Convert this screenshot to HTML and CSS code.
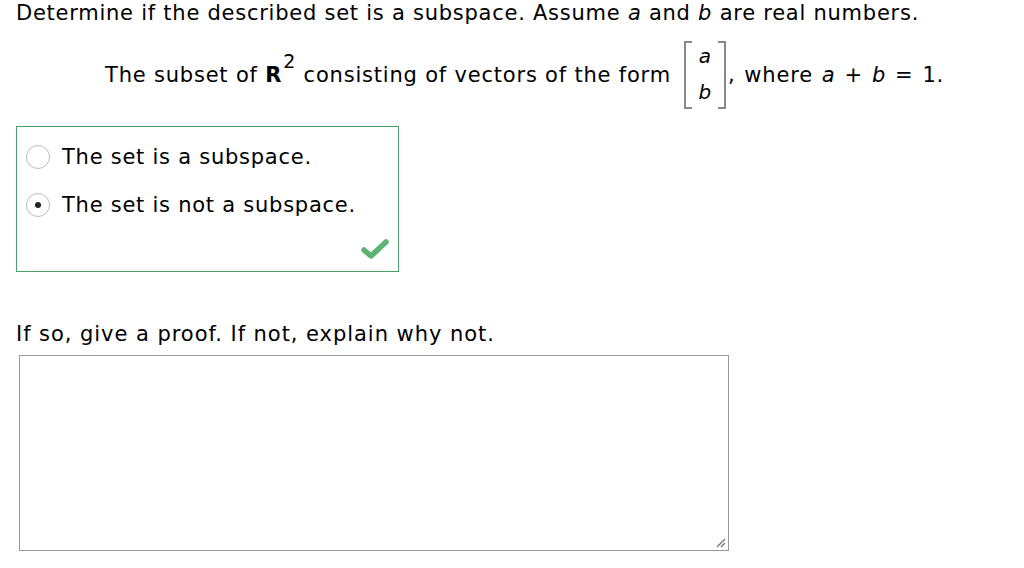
FILE: index.html
```html
<!DOCTYPE html>
<html>
<head>
<meta charset="utf-8">
<link rel="stylesheet" href="styles.css">
</head>
<body>
<div class="page">
  <p class="title">Determine if the described set is a subspace. Assume <i>a</i> and <i>b</i> are real numbers.</p>
  <div class="statement">
    <span>The subset of <b>R</b><sup>2</sup> consisting of vectors of the form</span>
    <span class="matrix">
      <span class="bracket left"></span>
      <span class="entries"><i>a</i><i>b</i></span>
      <span class="bracket right"></span>
    </span>
    <span class="after">, where <i>a</i> + <i>b</i> = 1.</span>
  </div>
  <div class="choices">
    <label class="choice"><span class="radio"></span><span>The set is a subspace.</span></label>
    <label class="choice"><span class="radio checked"></span><span>The set is not a subspace.</span></label>
    <svg class="check" width="28" height="22" viewBox="0 0 28 22"><path d="M3 12 L10 18 L25 4" fill="none" stroke="#5cb374" stroke-width="5.5" stroke-linecap="round" stroke-linejoin="round"/></svg>
  </div>
  <p class="prompt">If so, give a proof. If not, explain why not.</p>
  <div class="answer"><svg class="grip" width="12" height="12" viewBox="0 0 12 12"><path d="M11 3 L3 11 M11 7 L7 11" stroke="#777" stroke-width="1.4"/></svg></div>
</div>
</body>
</html>
```
FILE: styles.css
```css
html, body { margin: 0; padding: 0; background: #fff; }
body { font-family: "DejaVu Sans", Verdana, sans-serif; color: #000; font-size: 21px; letter-spacing: 0.75px; }
.page { padding: 0 0 0 16px; }
.title { margin: 0; padding-top: 1px; line-height: 24px; letter-spacing: 0.75px; }
.statement { display: flex; align-items: center; padding-left: 89px; margin-top: 16px; height: 68px; letter-spacing: 0.8px; }
.statement sup { font-size: 19px; position: relative; top: -6px; line-height: 0; margin-left: 1px; }
.matrix { display: inline-flex; align-items: stretch; height: 68px; margin-left: 13px; }
.bracket { width: 6px; border: 2px solid #888; }
.bracket.left { border-right: none; }
.bracket.right { border-left: none; }
.entries { display: flex; flex-direction: column; justify-content: space-between; align-items: center; width: 26px; font-size: 20px; padding: 3px 0 5px; letter-spacing: 0; }
.after { margin-left: 2px; word-spacing: 1.5px; }
.choices { position: relative; width: 381px; height: 144px; border: 1px solid #4f9c6c; margin-top: 17px; }
.choice { display: flex; align-items: center; height: 24px; margin-left: 9px; }
.choice:first-child { margin-top: 18px; }
.choice + .choice { margin-top: 24px; }
.radio { width: 22px; height: 22px; border: 1px solid #bbb; border-radius: 50%; margin-right: 12px; position: relative; background: #fff; flex: none; }
.radio.checked::after { content: ""; position: absolute; left: 8px; top: 8px; width: 6px; height: 6px; border-radius: 50%; background: #222; }
.check { position: absolute; right: 9px; bottom: 11px; }
.prompt { margin: 50px 0 0; line-height: 24px; letter-spacing: 0.95px; }
.answer { position: relative; width: 708px; height: 194px; margin: 9px 0 0 3px; border: 1px solid #999; }
.grip { position: absolute; right: 2px; bottom: 2px; }
```
